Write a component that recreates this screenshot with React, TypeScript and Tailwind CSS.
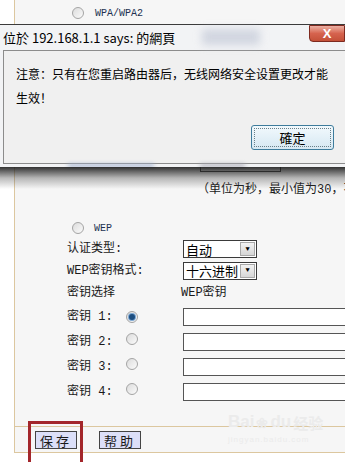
import React from "react";

function Radio({ checked }: { checked?: boolean }) {
  return (
    <span className="inline-flex w-[12px] h-[12px] shrink-0 items-center justify-center rounded-full border border-[#a4a4a4] bg-linear-to-br from-[#dcdcdc] to-[#fbfbfb]">
      {checked && <span className="w-[6px] h-[6px] rounded-full bg-[#1d4e80] ring-1 ring-[#7aa6d2]" />}
    </span>
  );
}

function Select({ value }: { value: string }) {
  return (
    <div className="w-[74px] h-[18px] border border-[#3a3a3a] bg-white flex items-center justify-between">
      <span className="pl-[2px] text-[13px] leading-none font-['Noto_Sans_CJK_SC',sans-serif] text-black">{value}</span>
      <span className="w-[15px] h-[14px] mr-[1px] bg-linear-to-b from-[#f2f2f2] to-[#d6d6d6] border border-[#a8a8a8] flex items-center justify-center text-[7px] text-black">▼</span>
    </div>
  );
}

function KeyRow({ n, checked }: { n: number; checked?: boolean }) {
  return (
    <div className="h-[25px] flex items-center">
      <span className="w-[59px]">密钥 {n}:</span>
      <span className="w-[57px]"><Radio checked={checked} /></span>
      <div className="flex-1 h-[18px] border border-[#555] bg-white" />
    </div>
  );
}

export default function App() {
  return (
    <div className="relative w-[345px] h-[462px] overflow-hidden bg-white text-[12px] text-[#1a1a1a] font-['Liberation_Mono','Noto_Sans_CJK_SC',monospace]">
      {/* page form */}
      <div className="ml-[14px] w-[345px] h-[453px] border-l border-b border-[#dcc79f] bg-[#f6f6f6] flex flex-col">
        <div className="h-[23px] pt-[3px] pl-[57px] flex items-center gap-[11px] text-[10px] text-[#203050]">
          <Radio />
          <span>WPA/WPA2</span>
        </div>
        <div className="h-[132px]" />
        <div className="h-[17px] pl-[185px]">
          <div className="w-[81px] h-[17px] border border-[#333] bg-white" />
        </div>
        <div className="h-[28px] pt-[10px] pl-[182px] whitespace-nowrap text-[12px] leading-[16px]">（单位为秒，最小值为30，不</div>
        <div className="h-[18px]" />
        <div className="h-[20px] pl-[57px] flex items-center gap-[10px] text-[10px] text-[#203050]">
          <Radio />
          <span>WEP</span>
        </div>
        <div className="pl-[52px]">
          <div className="h-[22px] flex items-center">
            <span className="w-[116px]">认证类型:</span>
            <Select value="自动" />
          </div>
          <div className="h-[21px] flex items-center">
            <span className="w-[116px]">WEP密钥格式:</span>
            <Select value="十六进制" />
          </div>
          <div className="h-[23px] flex items-center">
            <span className="w-[114px]">密钥选择</span>
            <span>WEP密钥</span>
          </div>
          <KeyRow n={1} checked />
          <KeyRow n={2} />
          <KeyRow n={3} />
          <KeyRow n={4} />
        </div>
        <div className="mt-auto border-t border-[#dcc79f] h-[26px] pt-[4px] pl-[20px] flex gap-[22px]">
          <button className="w-[42px] h-[18px] border border-[#444] bg-[#dcdff8] text-[13px] leading-none tracking-[3px] font-['Noto_Sans_CJK_SC',sans-serif]">保存</button>
          <button className="w-[42px] h-[18px] border border-[#444] bg-[#dcdff8] text-[13px] leading-none tracking-[3px] font-['Noto_Sans_CJK_SC',sans-serif]">帮助</button>
        </div>
      </div>

      {/* watermark */}
      <div className="absolute left-[228px] top-[413px] text-[#ebebeb] font-['Liberation_Sans',sans-serif] leading-none select-none">
        <div className="flex items-end gap-[2px] text-[17px] font-bold">
          <span>Bai</span>
          <span className="text-[14px]">❀</span>
          <span>du</span>
          <span className="text-[15px] font-['Noto_Sans_CJK_SC',sans-serif]">经验</span>
        </div>
        <div className="mt-[6px] text-[8px] tracking-[1px]">jingyan.baidu.com</div>
      </div>

      {/* annotation */}
      <div className="absolute left-[28px] top-[421px] w-[55px] h-[50px] border-[3px] border-[#a3262b]" />

      {/* alert dialog */}
      <div className="absolute left-0 top-[24px] w-[345px] h-[143px] border-t border-[#3b3b3b] bg-[#f2f3f5] flex flex-col">
        <div className="relative h-[25px] flex items-center pl-[3px] whitespace-nowrap text-[13px] text-black font-['Noto_Sans_CJK_TC',sans-serif]">
          <div className="absolute left-[202px] top-[4px] w-[58px] h-[16px] bg-[#c4cad8] blur-[4px] opacity-70" />
          <span className="relative">位於 192.168.1.1 says: 的網頁</span>
          <div className="absolute right-0 top-0 w-[36px] h-[17px] rounded-bl-[4px] border border-[#7e2a20] bg-linear-to-b from-[#eab0a4] via-[#d6634e] to-[#c45038] flex items-center justify-center text-white text-[13px] font-bold font-['Liberation_Sans',sans-serif]">X</div>
        </div>
        <div className="ml-[3px] h-[114px] border border-r-0 border-[#8c8c8c] bg-[#f0f0f0] flex flex-col pt-[11px] pl-[12px] pr-[11px] font-['Noto_Sans_CJK_SC',sans-serif]">
          <p className="w-[318px] text-[12px] leading-[24px] text-black">注意：只有在您重启路由器后，无线网络安全设置更改才能生效！</p>
          <div className="mt-[15px] flex justify-end">
            <div className="w-[83px] h-[25px] rounded-[3px] border border-[#3e7c9c] bg-linear-to-b from-[#f2f9fd] to-[#d6e8f2] p-[2px]">
              <div className="w-full h-full border border-dotted border-[#6a7f88] flex items-center justify-center text-[13px] text-black">確定</div>
            </div>
          </div>
        </div>
        <div className="relative flex-1">
          <div className="absolute left-[68px] top-0 w-[86px] h-[3px] bg-[#9fb0cf] blur-[2px]" />
          <div className="absolute left-[200px] top-0 w-[45px] h-[3px] bg-[#a8a8b4] blur-[2px]" />
        </div>
      </div>
      <div className="absolute left-0 top-[167px] w-[345px] h-[22px] bg-linear-to-b from-[#1c1c1c]/90 via-[#555]/40 to-transparent" />
    </div>
  );
}
